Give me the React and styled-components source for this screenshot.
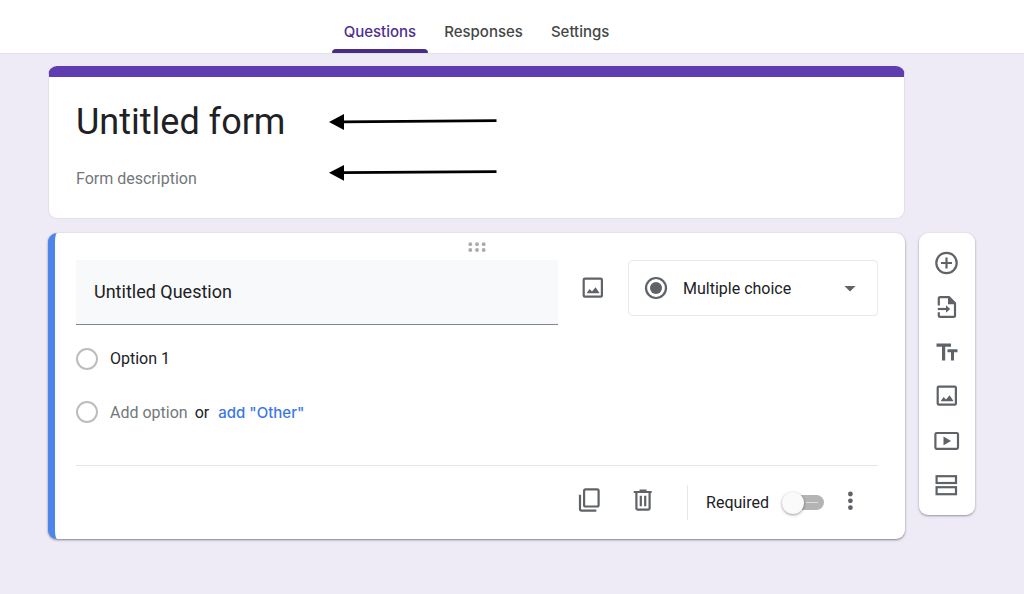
import React, { useState } from "react";
import styled, { createGlobalStyle } from "styled-components";

const GlobalStyle = createGlobalStyle`
  *, *::before, *::after {
    box-sizing: border-box;
  }
  body {
    margin: 0;
    background: #eeeaf6;
    color: #202124;
    font-family: Roboto, "Liberation Sans", sans-serif;
    font-size: 16px;
  }
  input, select, button {
    font: inherit;
    color: inherit;
  }
`;

const Header = styled.header`
  display: flex;
  justify-content: center;
  height: 54px;
  padding-right: 71px;
  background: #ffffff;
  border-bottom: 1px solid #e0dfe6;
`;

const TabList = styled.nav`
  display: flex;
  gap: 4px;
`;

const Tab = styled.button`
  display: flex;
  flex-direction: column;
  justify-content: space-between;
  padding: 22px 12px 0;
  border: none;
  background: none;
  font-family: Inter, "Open Sans", sans-serif;
  font-size: 15px;
  font-weight: 500;
  line-height: 20px;
  color: ${(props) => (props.$active ? "#4d2f8f" : "#444746")};
  cursor: pointer;

  &::after {
    content: "";
    height: 4px;
    margin: 0 -12px;
    align-self: stretch;
    border-radius: 4px 4px 0 0;
    background: ${(props) => (props.$active ? "#4a2c84" : "transparent")};
  }
`;

const Page = styled.main`
  display: grid;
  grid-template-columns: minmax(0, 1fr) 56px;
  align-items: start;
  gap: 14px;
  padding: 12px 49px 48px 48px;
`;

const TitleCard = styled.section`
  position: relative;
  grid-column: 1;
  padding: 24px 27px 27px;
  background: #ffffff;
  border: 1px solid #e2dfea;
  border-top: 11px solid #5f3db0;
  border-radius: 9px;
`;

const PlainInput = styled.input`
  display: block;
  width: 100%;
  padding: 0;
  border: none;
  outline: none;
  background: transparent;
  line-height: 24px;

  &::placeholder {
    color: #73777c;
    opacity: 1;
  }
`;

const TitleInput = styled(PlainInput)`
  height: 42px;
  margin-bottom: 24px;
  font-size: 36px;
  line-height: 42px;
`;

const Arrows = styled.svg`
  position: absolute;
  top: 32px;
  left: 279px;
  pointer-events: none;
`;

const QuestionCard = styled.section`
  grid-column: 1;
  padding: 0 27px 0 21px;
  background: #ffffff;
  border-left: 7px solid #4d86ea;
  border-radius: 9px;
  box-shadow: 0 1px 2px rgba(60, 64, 67, 0.5), 0 1px 3px rgba(60, 64, 67, 0.15);
`;

const DragHandle = styled.div`
  display: flex;
  align-items: center;
  justify-content: center;
  height: 27px;
`;

const QuestionRow = styled.div`
  display: flex;
  align-items: flex-start;
  gap: 15px;
`;

const QuestionInput = styled.input`
  flex: 1;
  min-width: 0;
  height: 65px;
  padding: 0 18px 2px;
  border: none;
  border-bottom: 1px solid #80868b;
  outline: none;
  background: #f8f9fb;
  font-size: 18px;
`;

const IconButton = styled.button`
  display: flex;
  align-items: center;
  justify-content: center;
  flex: none;
  width: 40px;
  height: ${(props) => props.$height || 44}px;
  padding: 0;
  border: none;
  background: none;
  color: #5f6368;
  cursor: pointer;
`;

const SelectBox = styled.label`
  display: grid;
  grid-template-columns: 250px;
  align-items: center;
  height: 56px;
  color: #5f6368;

  & > * {
    grid-area: 1 / 1;
  }
  & > svg {
    margin-left: 16px;
    pointer-events: none;
  }
  & > svg:last-child {
    margin: 0 16px 0 0;
    justify-self: end;
  }
`;

const Select = styled.select`
  appearance: none;
  width: 100%;
  height: 56px;
  padding: 0 44px 0 54px;
  border: 1px solid #e8e9eb;
  border-radius: 4px;
  outline: none;
  background: transparent;
  color: #202124;
`;

const Options = styled.div`
  display: flex;
  flex-direction: column;
  gap: 31px;
  padding: 23px 0 42px;
`;

const OptionRow = styled.div`
  display: flex;
  align-items: center;
  height: 22px;
`;

const Radio = styled.input`
  appearance: none;
  flex: none;
  width: 22px;
  height: 22px;
  margin: 0 12px 0 0;
  border: 2px solid #bdbdbd;
  border-radius: 50%;
`;

const TextButton = styled.button`
  padding: 0;
  border: none;
  background: none;
  color: #73777c;
  cursor: pointer;
`;

const LinkButton = styled(TextButton)`
  font-family: Inter, "Open Sans", sans-serif;
  font-size: 15px;
  font-weight: 500;
  color: #3b78e7;
`;

const Or = styled.span`
  margin: 0 9px 0 7px;
`;

const Footer = styled.div`
  display: flex;
  justify-content: flex-end;
  padding: 19px 8px 19px 0;
  border-top: 1px solid #e6e7e9;
`;

const FooterGroup = styled.div`
  display: flex;
  align-items: flex-start;
  gap: 14px;
  height: 35px;
  padding-right: 24px;
  border-right: 1px solid #e6e7e9;
`;

const RequiredGroup = styled.div`
  display: flex;
  align-items: center;
  height: 35px;
  padding-left: 18px;
`;

const Switch = styled.input`
  appearance: none;
  display: flex;
  align-items: center;
  width: 40px;
  height: 15px;
  margin: 0 6px 0 15px;
  border-radius: 8px;
  background: linear-gradient(#dcdcdc, #dcdcdc) 22px 7px / 12px 1px no-repeat,
    #b4b4b4;
  cursor: pointer;

  &::before {
    content: "";
    width: 22px;
    height: 22px;
    margin-left: -2px;
    border-radius: 50%;
    background: #fafafa;
    box-shadow: 0 1px 3px rgba(0, 0, 0, 0.4);
  }
  &:checked::before {
    margin-left: 20px;
    background: #5f3db0;
  }
`;

const Toolbar = styled.aside`
  grid-column: 2;
  display: flex;
  flex-direction: column;
  align-items: center;
  justify-content: space-between;
  min-height: 282px;
  padding: 8px 0;
  background: #ffffff;
  border-radius: 9px;
  box-shadow: 0 1px 2px rgba(60, 64, 67, 0.4), 0 1px 3px rgba(60, 64, 67, 0.15);
`;

const Icon = ({ children, size = 26 }) => (
  <svg
    width={size}
    height={size}
    viewBox={`0 0 ${size} ${size}`}
    fill="none"
    stroke="currentColor"
    strokeWidth="2.2"
    aria-hidden="true"
  >
    {children}
  </svg>
);

const ImageIcon = () => (
  <Icon>
    <rect x="3.7" y="3.6" width="18.2" height="18" rx="1.2" />
    <path
      d="M6.6 18.3l3-4.2 2.4 2.4 3.6-4.2 4 6z"
      fill="currentColor"
      stroke="none"
    />
  </Icon>
);

const AddIcon = () => (
  <Icon>
    <circle cx="12.5" cy="13" r="10.2" />
    <path d="M12.5 7.5v11M7 13h11" />
  </Icon>
);

const ImportIcon = () => (
  <Icon>
    <path d="M4.8 11.5V4.5a1.4 1.4 0 0 1 1.4-1.4H15l6 6v12.4a1.4 1.4 0 0 1-1.4 1.4H6.2a1.4 1.4 0 0 1-1.4-1.4v-3.3" />
    <path d="M14 3v7.2h7z" fill="currentColor" stroke="none" />
    <path d="M3.8 15h9.2" />
    <path d="M12 11.3l4.2 3.7-4.2 3.7z" fill="currentColor" stroke="none" />
  </Icon>
);

const TextSizeIcon = () => (
  <Icon>
    <path d="M2.5 6.2h14.5M9.6 5v16.5" strokeWidth="3.2" />
    <path d="M13.5 11.8h10M18.5 11v10.5" strokeWidth="3" />
  </Icon>
);

const VideoIcon = () => (
  <Icon>
    <rect x="1.4" y="5" width="22.6" height="15.8" rx="1.2" />
    <path d="M9.5 8.6v8.6l7.6-4.3z" fill="currentColor" stroke="none" />
  </Icon>
);

const SectionIcon = () => (
  <Icon>
    <rect x="2.6" y="4.2" width="19.4" height="6.8" />
    <rect x="2.6" y="15.2" width="19.4" height="7" />
  </Icon>
);

const CopyIcon = () => (
  <Icon>
    <rect x="8.1" y="2.3" width="14.5" height="17.2" rx="1.5" />
    <path d="M4 7.7v14.6a1.4 1.4 0 0 0 1.4 1.4H20.3" />
  </Icon>
);

const TrashIcon = () => (
  <Icon>
    <path d="M3.7 5h18M9.5 3.7h7" />
    <path d="M6.4 5V21.200a1.400 1.400 0 0 0 1.400 1.400h10.400a1.400 1.400 0 0 0 1.400-1.400V5M10.800 8.700v10.600M15.200 8.700v10.600" />
  </Icon>
);

const MoreIcon = () => (
  <Icon>
    <g fill="currentColor" stroke="none">
      <circle cx="13.4" cy="4" r="2.4" />
      <circle cx="13.4" cy="10.8" r="2.4" />
      <circle cx="13.4" cy="17.6" r="2.4" />
    </g>
  </Icon>
);

const tabs = ["Questions", "Responses", "Settings"];

const tools = [
  { label: "Add question", Glyph: AddIcon },
  { label: "Import questions", Glyph: ImportIcon },
  { label: "Add title and description", Glyph: TextSizeIcon },
  { label: "Add image", Glyph: ImageIcon },
  { label: "Add video", Glyph: VideoIcon },
  { label: "Add section", Glyph: SectionIcon },
];

const App = () => {
  const [activeTab, setActiveTab] = useState("Questions");
  const [title, setTitle] = useState("Untitled form");
  const [question, setQuestion] = useState("Untitled Question");
  const [option, setOption] = useState("Option 1");
  const [required, setRequired] = useState(false);

  return (
    <>
      <GlobalStyle />
      <Header>
        <TabList>
          {tabs.map((tab) => (
            <Tab
              key={tab}
              type="button"
              $active={tab === activeTab}
              onClick={() => setActiveTab(tab)}
            >
              {tab}
            </Tab>
          ))}
        </TabList>
      </Header>

      <Page>
        <TitleCard>
          <TitleInput
            aria-label="Form title"
            value={title}
            onChange={(e) => setTitle(e.target.value)}
          />
          <PlainInput
            aria-label="Form description"
            placeholder="Form description"
          />
          <Arrows width="170" height="74" viewBox="0 0 170 74">
            <g stroke="#000" strokeWidth="2.8">
              <path d="M14 12.8L168.500 11.600M14 63.600L168.500 62.600" />
            </g>
            <path d="M1 13l15-8v16zM1 63.700l15-7.800v15.800z" />
          </Arrows>
        </TitleCard>

        <QuestionCard>
          <DragHandle>
            <svg width="18" height="10" viewBox="0 0 18 10" fill="#a8abae">
              {[2.3, 9, 15.7].map((x) => (
                <React.Fragment key={x}>
                  <circle cx={x} cy="2.2" r="1.9" />
                  <circle cx={x} cy="8" r="1.9" />
                </React.Fragment>
              ))}
            </svg>
          </DragHandle>

          <QuestionRow>
            <QuestionInput
              aria-label="Question"
              value={question}
              onChange={(e) => setQuestion(e.target.value)}
            />
            <IconButton type="button" $height={56} aria-label="Add image">
              <ImageIcon />
            </IconButton>
            <SelectBox>
              <Icon size={24}>
                <circle cx="12" cy="12" r="10" />
                <circle cx="12" cy="12" r="6" fill="currentColor" stroke="none" />
              </Icon>
              <Select aria-label="Question type" defaultValue="multiple">
                <option value="multiple">Multiple choice</option>
                <option value="checkboxes">Checkboxes</option>
                <option value="dropdown">Dropdown</option>
              </Select>
              <Icon size={24}>
                <path d="M6.5 10h11L12 15.5z" fill="currentColor" stroke="none" />
              </Icon>
            </SelectBox>
          </QuestionRow>

          <Options>
            <OptionRow>
              <Radio type="radio" name="answer" aria-label="Option 1" />
              <PlainInput
                aria-label="Option text"
                value={option}
                onChange={(e) => setOption(e.target.value)}
              />
            </OptionRow>
            <OptionRow>
              <Radio type="radio" name="answer" aria-label="Add option" />
              <TextButton type="button">Add option</TextButton>
              <Or>or</Or>
              <LinkButton type="button">add "Other"</LinkButton>
            </OptionRow>
          </Options>

          <Footer>
            <FooterGroup>
              <IconButton type="button" $height={30} aria-label="Duplicate">
                <CopyIcon />
              </IconButton>
              <IconButton type="button" $height={30} aria-label="Delete">
                <TrashIcon />
              </IconButton>
            </FooterGroup>
            <RequiredGroup>
              <label htmlFor="required">Required</label>
              <Switch
                id="required"
                type="checkbox"
                checked={required}
                onChange={(e) => setRequired(e.target.checked)}
              />
              <IconButton type="button" aria-label="More options">
                <MoreIcon />
              </IconButton>
            </RequiredGroup>
          </Footer>
        </QuestionCard>

        <Toolbar>
          {tools.map(({ label, Glyph }) => (
            <IconButton key={label} type="button" aria-label={label}>
              <Glyph />
            </IconButton>
          ))}
        </Toolbar>
      </Page>
    </>
  );
};

export default App;
